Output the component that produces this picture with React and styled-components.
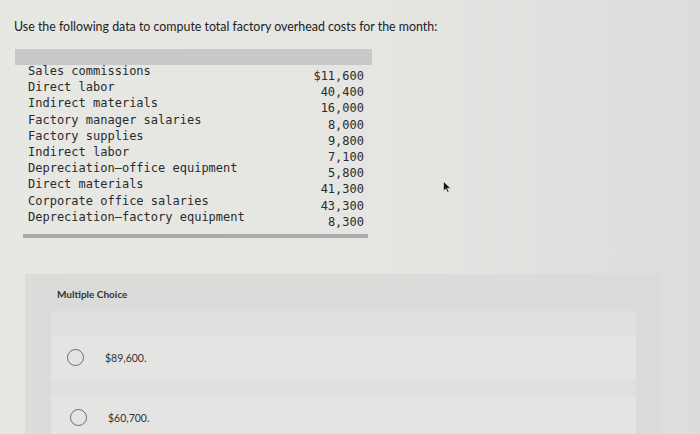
import React from 'react';
import styled, { createGlobalStyle } from 'styled-components';

const GlobalStyle = createGlobalStyle`
  html, body {
    margin: 0;
    padding: 0;
    background: #e4e4e1;
  }
  body {
    width: 700px;
    height: 434px;
    overflow: hidden;
    font-family: Lato, "Liberation Sans", sans-serif;
  }
`;

const rows = [
  ['Sales commissions', '$11,600'],
  ['Direct labor', '40,400'],
  ['Indirect materials', '16,000'],
  ['Factory manager salaries', '8,000'],
  ['Factory supplies', '9,800'],
  ['Indirect labor', '7,100'],
  ['Depreciation\u2013office equipment', '5,800'],
  ['Direct materials', '41,300'],
  ['Corporate office salaries', '43,300'],
  ['Depreciation\u2013factory equipment', '8,300'],
];

const choices = ['$89,600.', '$60,700.'];

const App = () => {
  return (
    <>
      <GlobalStyle />
      <Page>
        <Question>Use the following data to compute total factory overhead costs for the month:</Question>

        <DataTable>
          <HeaderBar />
          <TableBody>
            <LabelCol>
              {rows.map(([label]) => (
                <Cell key={label}>{label}</Cell>
              ))}
            </LabelCol>
            <ValueCol>
              {rows.map(([label, value]) => (
                <Cell key={label}>{value}</Cell>
              ))}
            </ValueCol>
          </TableBody>
        </DataTable>

        <ChoicePanel>
          <PanelTitle>Multiple Choice</PanelTitle>
          <Options>
            {choices.map((c, i) => (
              <Option key={c} shift={i * 3}>
                <Radio />
                <OptionText>{c}</OptionText>
              </Option>
            ))}
          </Options>
        </ChoicePanel>

        <Cursor width="9" height="12" viewBox="0 0 9 12">
          <path d="M0.5 0.5 L0.5 10 L2.8 7.8 L4.6 11.5 L6 10.8 L4.3 7.2 L7.6 7.2 Z" fill="#111" stroke="#f4f4f4" strokeWidth="0.6" />
        </Cursor>
      </Page>
    </>
  );
};

export default App;

const Page = styled.div`
  position: relative;
  width: 700px;
  height: 434px;
  padding-top: 19px;
  box-sizing: border-box;
  background: linear-gradient(90deg, #e7e7e4 0%, #e5e5e2 55%, #dcdcdb 100%);
`;

const Question = styled.div`
  margin-left: 14px;
  font-size: 12.4px;
  line-height: 16px;
  color: #222;
`;

const DataTable = styled.div`
  margin: 14px 0 0 15px;
  width: 357px;
`;

const HeaderBar = styled.div`
  height: 16px;
  background: #c6c8ca;
`;

const TableBody = styled.div`
  display: grid;
  grid-template-columns: 1fr auto;
  margin: 0 4px 0 8px;
  padding: 0 4px 4px 4px;
  border-bottom: 4px solid #a9abad;
  font-family: "DejaVu Sans Mono", "Liberation Mono", monospace;
  font-size: 12px;
  color: #2b2b2b;
`;

const LabelCol = styled.div`
  display: flex;
  flex-direction: column;
  margin-top: -2px;
  padding-left: 1px;
`;

const ValueCol = styled.div`
  display: flex;
  flex-direction: column;
  align-items: flex-end;
  padding-top: 3px;
`;

const Cell = styled.div`
  height: 16.2px;
  line-height: 16px;
  white-space: pre;
`;

const ChoicePanel = styled.div`
  margin: 36px 0 0 25px;
  width: 635px;
  height: 170px;
  background: #dbdbd9;
`;

const PanelTitle = styled.div`
  height: 37px;
  box-sizing: border-box;
  padding: 14px 0 0 32px;
  font-size: 10px;
  font-weight: 700;
  color: #333;
`;

const Options = styled.div`
  display: flex;
  flex-direction: column;
  gap: 18px;
  margin: 0 24px 0 26px;
  padding-top: 26px;
  background: #e0e0de;
  height: 133px;
  box-sizing: border-box;
`;

const Option = styled.div`
  display: flex;
  align-items: center;
  height: 42px;
  padding-left: ${p => 16 + p.shift}px;
  background: #e4e4e2;
`;

const Radio = styled.span`
  width: 15px;
  height: 15px;
  border: 1.6px solid #6c6c74;
  border-radius: 50%;
  flex-shrink: 0;
`;

const OptionText = styled.span`
  margin-left: 21px;
  font-size: 10.5px;
  color: #333;
`;

const Cursor = styled.svg`
  position: absolute;
  left: 443px;
  top: 181px;
`;
